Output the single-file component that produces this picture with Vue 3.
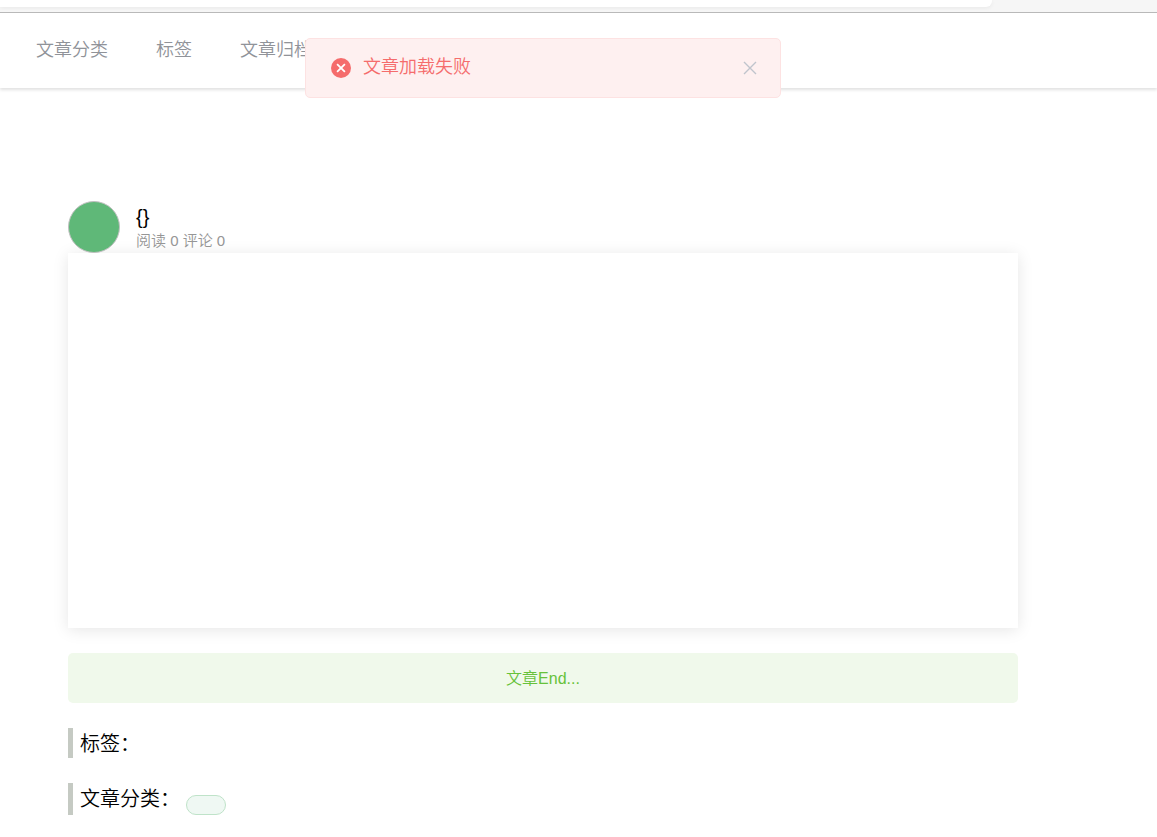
<script setup>
import { ref } from 'vue'

const navItems = ['文章分类', '标签', '文章归档']
const messageOpen = ref(true)
const article = { title: '{}', views: 0, comments: 0 }
</script>

<template>
  <div class="page">
    <div class="browser-strip"><div class="address-field"></div></div>

    <header class="header">
      <nav class="nav">
        <a v-for="item in navItems" :key="item" href="#" class="nav-link">{{ item }}</a>
      </nav>
    </header>

    <div v-if="messageOpen" class="message-layer">
      <div class="message" role="alert">
        <svg class="message-icon" viewBox="0 0 20 20" aria-hidden="true">
          <circle cx="10" cy="10" r="10" fill="#f56c6c" />
          <path d="M6.1 6.1l7.8 7.8M13.9 6.1l-7.8 7.8" stroke="#fff" stroke-width="1.8" />
        </svg>
        <p class="message-text">文章加载失败</p>
        <button class="message-close" type="button" aria-label="关闭" @click="messageOpen = false">
          <svg viewBox="0 0 14 14" aria-hidden="true">
            <path d="M1 1l12 12M13 1L1 13" stroke="#c0c4cc" stroke-width="1.4" />
          </svg>
        </button>
      </div>
    </div>

    <main class="content">
      <section class="author">
        <div class="avatar"></div>
        <div class="info">
          <h1 class="title">{{ article.title }}</h1>
          <p class="meta">阅读 {{ article.views }} 评论 {{ article.comments }}</p>
        </div>
      </section>
      <article class="article-body"></article>
      <div class="end">文章End...</div>
      <section class="row tags"><span>标签：</span></section>
      <section class="row category"><span>文章分类：</span><span class="tag"></span></section>
    </main>
  </div>
</template>

<style>
body {
  margin: 0;
  background: #fff;
}
</style>

<style scoped>
.page {
  position: relative;
  font-family: "Liberation Sans", "Noto Sans CJK SC", sans-serif;
  font-weight: 350;
  color: #000;
}

.browser-strip {
  box-sizing: border-box;
  height: 13px;
  padding-right: 165px;
  background: #f6f6f6;
  border-bottom: 1px solid #bababa;
}

.address-field {
  height: 7px;
  background: #fff;
  border-radius: 0 0 6px 0;
  box-shadow: 0 1px 4px rgba(0, 0, 0, 0.06);
}

.header {
  height: 75px;
  box-shadow: 0 2px 3px rgba(0, 0, 0, 0.12);
}

.nav {
  display: flex;
  gap: 48px;
  padding: 23px 36px 0;
}

.nav-link {
  color: #909399;
  font-size: 18px;
  line-height: 28px;
  text-decoration: none;
}

.message-layer {
  position: absolute;
  top: 38px;
  right: 139px;
  left: 68px;
  display: flex;
  justify-content: center;
}

.message {
  box-sizing: border-box;
  display: flex;
  align-items: center;
  width: 50%;
  min-width: 476px;
  height: 60px;
  padding: 0 23px 0 25px;
  background: #fef0f0;
  border: 1px solid #fde2e2;
  border-radius: 5px;
}

.message-icon {
  width: 20px;
  height: 20px;
}

.message-text {
  flex: 1;
  margin: 0 0 0 12px;
  padding-bottom: 2px;
  color: #f56c6c;
  font-size: 18px;
  line-height: 28px;
}

.message-close {
  display: flex;
  padding: 0;
  background: none;
  border: 0;
  cursor: pointer;
}

.message-close svg {
  width: 14px;
  height: 14px;
}

.content {
  padding: 113px 139px 22px 68px;
}

.author {
  display: flex;
  gap: 16px;
}

.avatar {
  box-sizing: border-box;
  width: 52px;
  height: 52px;
  background: #5fb878;
  border: 1px solid #c0c0c0;
  border-radius: 50%;
}

.title {
  margin: 4px 0 0;
  font-size: 20px;
  font-weight: 400;
  line-height: 24px;
}

.meta {
  margin: 0;
  color: #969696;
  font-size: 15px;
  line-height: 24px;
}

.article-body {
  min-height: 375px;
  background: #fff;
  box-shadow: 0 2px 15px rgba(0, 0, 0, 0.1);
}

.end {
  margin-top: 25px;
  padding-top: 2px;
  background: #f0f9eb;
  border-radius: 5px;
  color: #67c23a;
  font-size: 16px;
  line-height: 48px;
  text-align: center;
}

.row {
  display: flex;
  height: 30px;
  margin-top: 25px;
  padding-left: 7px;
  border-left: 5px solid #c5cac3;
  font-size: 20px;
  line-height: 32px;
}

.category {
  height: 32px;
}

.tag {
  box-sizing: border-box;
  align-self: flex-end;
  width: 40px;
  height: 20px;
  margin-left: 6px;
  background: #eff8f3;
  border: 1px solid #bfe3c9;
  border-radius: 10px;
}
</style>
